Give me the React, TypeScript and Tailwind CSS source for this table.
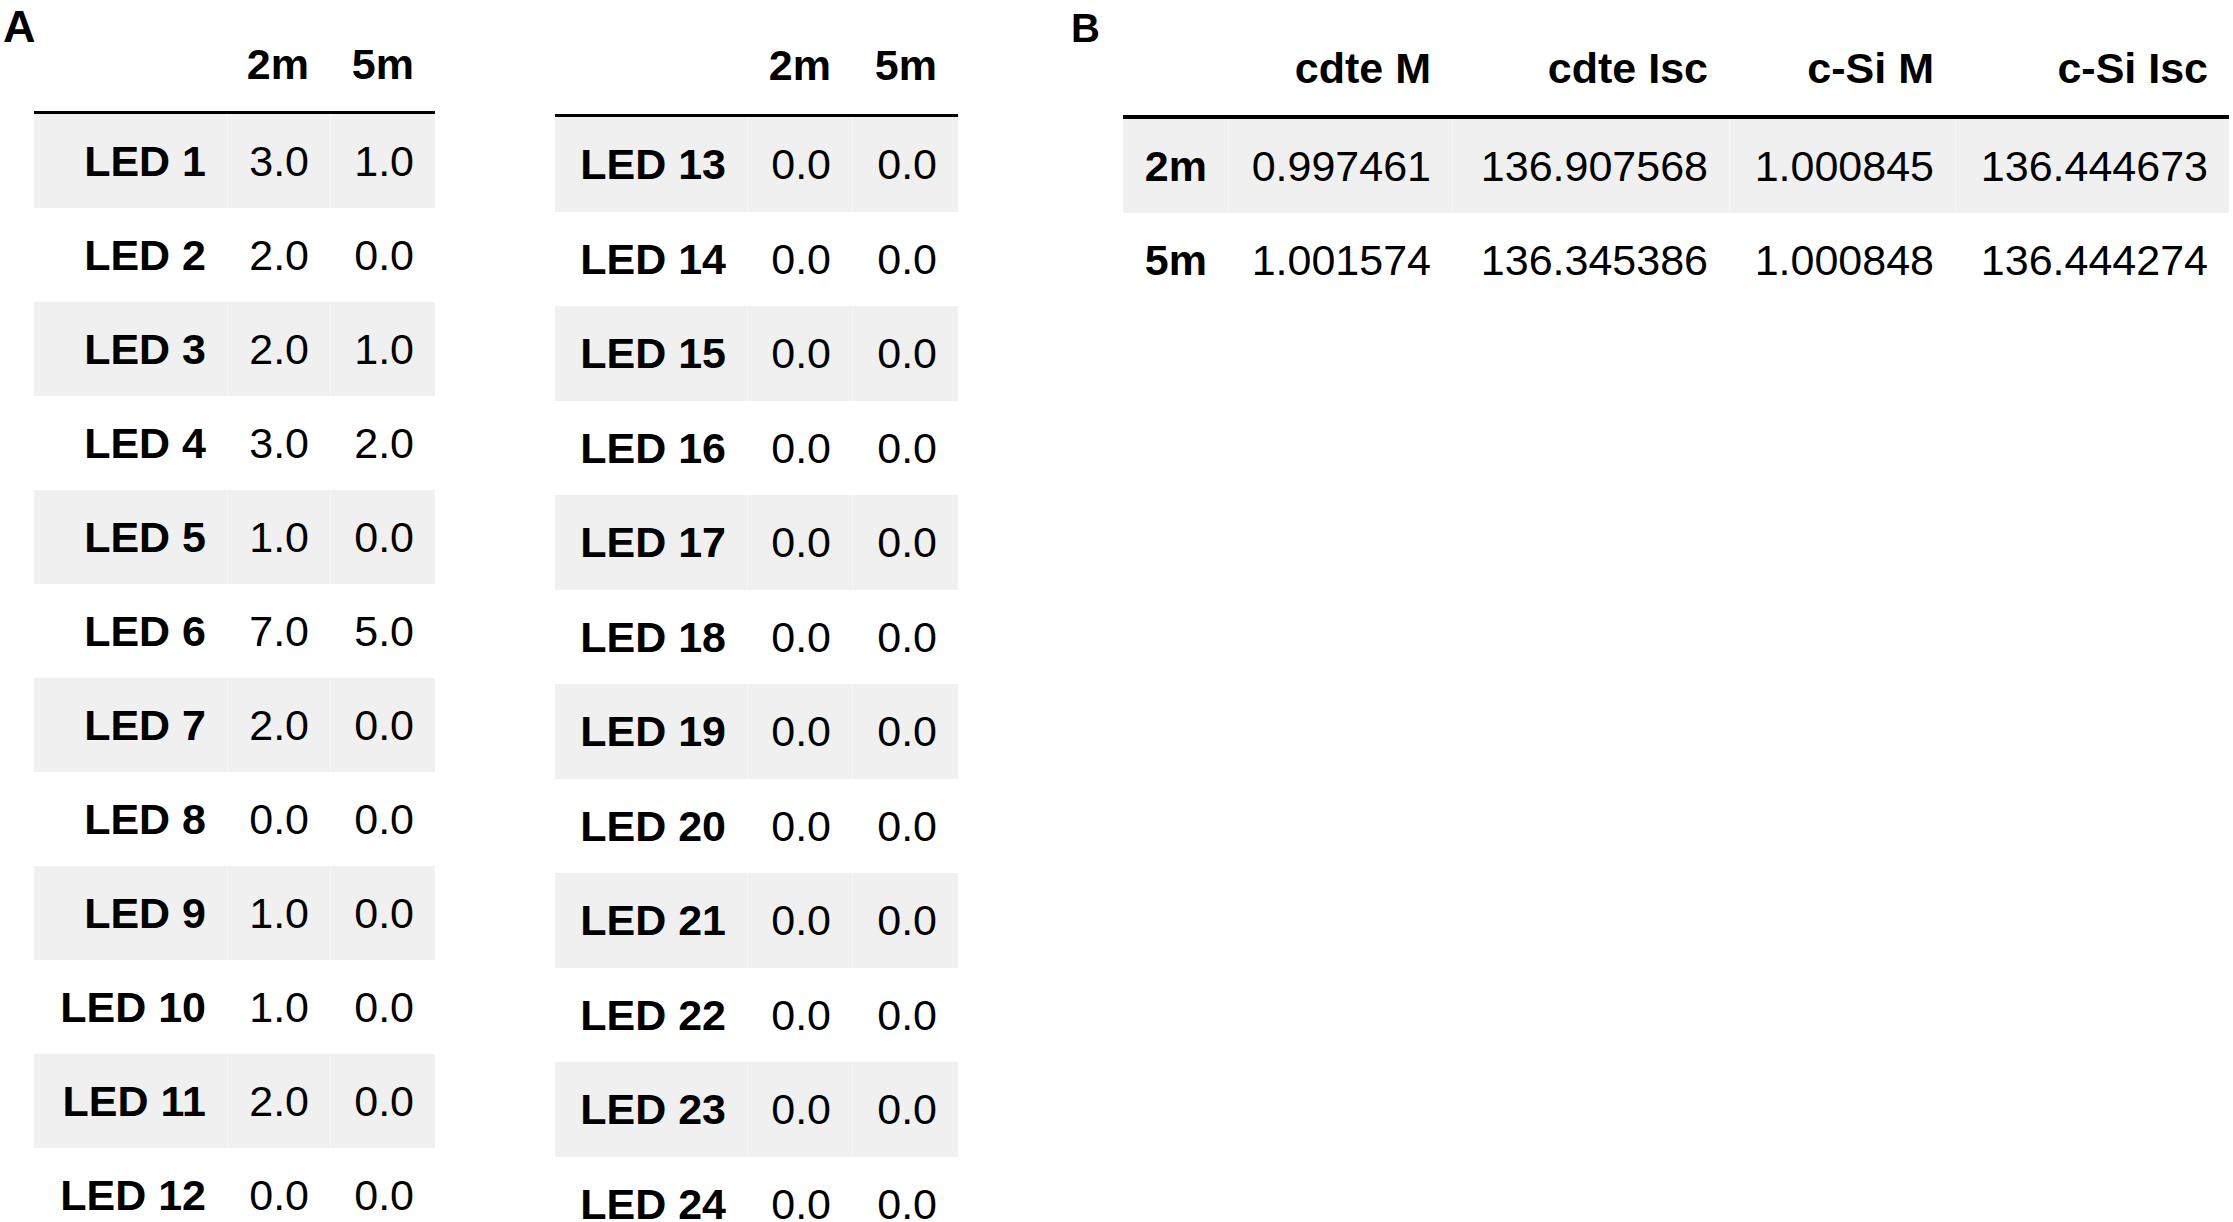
import React from "react";

type TableProps = {
  cols: number[];
  header: string[];
  rows: string[][];
  rowH: string;
  headH: string;
  headPb: string;
  line: string;
};

const ledA: string[][] = [
  ["LED 1", "3.0", "1.0"],
  ["LED 2", "2.0", "0.0"],
  ["LED 3", "2.0", "1.0"],
  ["LED 4", "3.0", "2.0"],
  ["LED 5", "1.0", "0.0"],
  ["LED 6", "7.0", "5.0"],
  ["LED 7", "2.0", "0.0"],
  ["LED 8", "0.0", "0.0"],
  ["LED 9", "1.0", "0.0"],
  ["LED 10", "1.0", "0.0"],
  ["LED 11", "2.0", "0.0"],
  ["LED 12", "0.0", "0.0"],
];

const ledB: string[][] = Array.from({ length: 12 }, (_, i) => [`LED ${i + 13}`, "0.0", "0.0"]);

const modules: string[][] = [
  ["2m", "0.997461", "136.907568", "1.000845", "136.444673"],
  ["5m", "1.001574", "136.345386", "1.000848", "136.444274"],
];

function DataTable({ cols, header, rows, rowH, headH, headPb, line }: TableProps) {
  return (
    <div className="flex flex-col">
      <div className={`flex ${headH} ${line} border-black`}>
        {header.map((h, i) => (
          <div
            key={i}
            style={{ width: cols[i] }}
            className={`flex items-end justify-end pr-[21px] ${headPb} font-bold text-[43px] leading-[43px]`}
          >
            {h}
          </div>
        ))}
      </div>
      {rows.map((r, ri) => (
        <div key={ri} className={`flex ${rowH} ${ri % 2 === 0 ? "bg-[#f0f0f0]" : "bg-white"}`}>
          {r.map((c, ci) => (
            <div
              key={ci}
              style={{ width: cols[ci] }}
              className={`flex items-center justify-end pr-[21px] text-[43px] leading-[34px] ${
                ci === 0 ? "font-bold" : "font-normal"
              } ${ci > 0 && ri % 2 === 0 ? "border-l border-[#f7f7f7]" : ""}`}
            >
              {c}
            </div>
          ))}
        </div>
      ))}
    </div>
  );
}

export default function App() {
  return (
    <div className="w-[2233px] h-[1222px] overflow-hidden bg-white text-black flex font-['Liberation_Sans',Arial,sans-serif]">
      {/* panel A */}
      <div className="w-[1071px] pl-[3px] flex flex-col">
        <div className="mt-[7px] mb-[1px] h-[40px] text-[45px] leading-[40px] font-bold">A</div>
        <div className="flex items-start">
          <div className="ml-[31px]">
            <DataTable
              cols={[193, 103, 105]}
              header={["", "2m", "5m"]}
              rows={ledA}
              rowH="h-[94px]"
              headH="h-[66px]"
              headPb="pb-[25px]"
              line="border-b-[3px]"
            />
          </div>
          <div className="ml-[120px]">
            <DataTable
              cols={[192, 105, 106]}
              header={["", "2m", "5m"]}
              rows={ledB}
              rowH="h-[94.5px]"
              headH="h-[69px]"
              headPb="pb-[27px]"
              line="border-b-[3px]"
            />
          </div>
        </div>
      </div>
      {/* panel B */}
      <div className="flex flex-col">
        <div className="mt-[8px] h-[40px] text-[40px] leading-[40px] font-bold">B</div>
        <div className="ml-[52px]">
          <DataTable
            cols={[105, 224, 277, 226, 274]}
            header={["", "cdte M", "cdte Isc", "c-Si M", "c-Si Isc"]}
            rows={modules}
            rowH="h-[94px]"
            headH="h-[71px]"
            headPb="pb-[25px]"
            line="border-b-[4px]"
          />
        </div>
      </div>
    </div>
  );
}
